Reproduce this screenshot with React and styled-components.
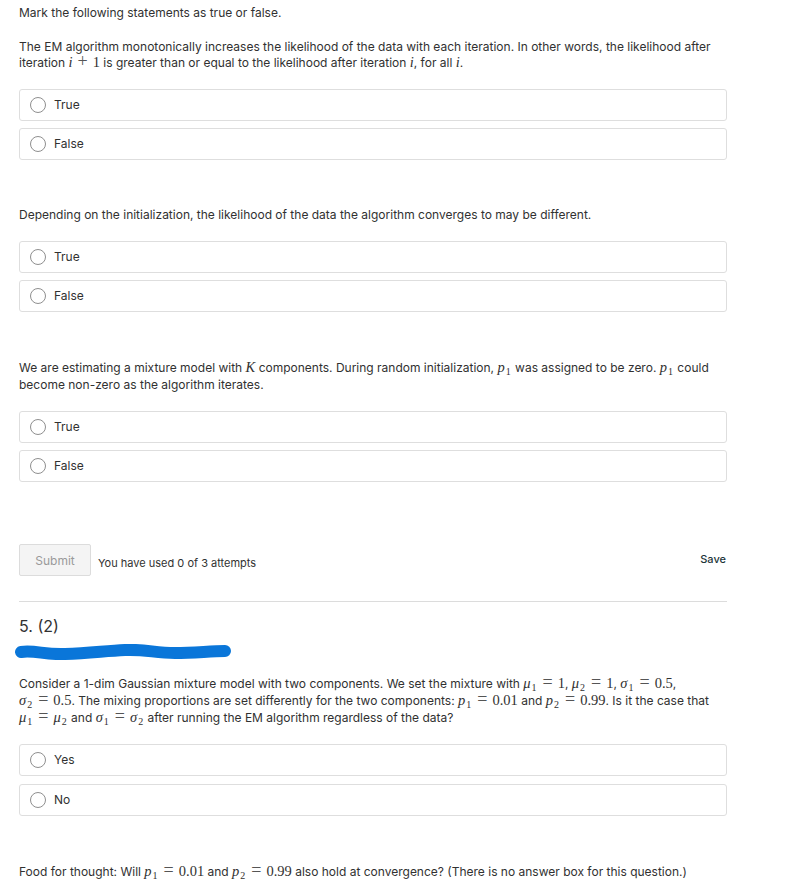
import React from 'react';
import styled, { createGlobalStyle } from 'styled-components';

const GlobalStyle = createGlobalStyle`
  body {
    margin: 0;
    background: #fff;
    font-family: Inter, "Noto Sans", sans-serif;
    color: #313131;
  }
`;

const Page = styled.div`
  width: 708px;
  padding: 5px 0 20px 19px;
  font-size: 12px;
  line-height: 16px;
`;

const Para = styled.p`
  margin: ${props => props.top || 0}px 0 0;
  line-height: ${props => props.lh || 16}px;
`;

const Options = styled.div`
  display: flex;
  flex-direction: column;
  gap: ${props => props.gap || 7}px;
  margin-top: ${props => props.top || 18}px;
`;

const Option = styled.label`
  display: flex;
  align-items: center;
  height: 30px;
  border: 1px solid #dedede;
  border-radius: 3px;
  padding-left: 10px;
  gap: 8px;
  cursor: pointer;
`;

const Radio = styled.span`
  width: 16px;
  height: 16px;
  border: 1px solid #8f8f8f;
  border-radius: 50%;
  box-sizing: border-box;
  flex: none;
`;

const M = styled.span`
  font-family: "Liberation Serif", "DejaVu Serif", serif;
  font-size: 14.5px;
  font-style: ${props => (props.up ? 'normal' : 'italic')};
  white-space: nowrap;
  line-height: 1;
`;

const Num = styled.span`
  font-style: normal;
`;

const Sub = styled.sub`
  font-style: normal;
  font-size: 10px;
  vertical-align: -3px;
  line-height: 0;
  margin-left: 1px;
  margin-right: 1px;
`;

const Op = styled.span`
  font-style: normal;
  font-size: 18px;
  line-height: 0;
  margin: 0 5px;
  color: #555;
`;

const ActionRow = styled.div`
  display: flex;
  align-items: center;
  margin-top: 62px;
`;

const SubmitButton = styled.button`
  width: 72px;
  height: 32px;
  background: #f4f4f4;
  border: 1px solid #dcdcdc;
  border-radius: 2px;
  color: #9a9a9a;
  font-family: Inter, sans-serif;
  font-size: 12px;
  padding: 0;
`;

const Attempts = styled.span`
  margin-left: 7px;
  margin-top: 6px;
  font-size: 11px;
`;

const SaveLink = styled.span`
  margin-left: auto;
  margin-top: -2px;
  margin-right: 1px;
  font-size: 11px;
  color: #1d3539;
  font-weight: 500;
`;

const Rule = styled.hr`
  border: none;
  border-top: 1px solid #dcdcdc;
  margin: 25px 0 0;
`;

const QTitle = styled.h3`
  margin: 14px 0 0;
  font-size: 16px;
  font-weight: 400;
  line-height: 20px;
`;

const Scribble = styled.svg`
  display: block;
  margin: 8px 0 0 -4px;
`;

const v = (name, sub) => (
  <>
    {name}
    {sub && <Sub>{sub}</Sub>}
  </>
);

function Choice({ label }) {
  return (
    <Option>
      <Radio />
      <span>{label}</span>
    </Option>
  );
}

export default function App() {
  return (
    <Page>
      <GlobalStyle />
      <Para>Mark the following statements as true or false.</Para>

      <Para top={18}>
        The EM algorithm monotonically increases the likelihood of the data with each
        iteration. In other words, the likelihood after iteration{' '}
        <M>i<Op>+</Op><Num>1</Num></M> is greater than or equal to the likelihood after
        iteration <M>i</M>, for all <M>i</M>.
      </Para>
      <Options>
        <Choice label="True" />
        <Choice label="False" />
      </Options>

      <Para top={47}>
        Depending on the initialization, the likelihood of the data the algorithm
        converges to may be different.
      </Para>
      <Options>
        <Choice label="True" />
        <Choice label="False" />
      </Options>

      <Para top={47} lh={17}>
        We are estimating a mixture model with <M>K</M> components. During random
        initialization, <M>{v('p', '1')}</M> was assigned to be zero. <M>{v('p', '1')}</M> could
        become non-zero as the algorithm iterates.
      </Para>
      <Options>
        <Choice label="True" />
        <Choice label="False" />
      </Options>

      <ActionRow>
        <SubmitButton>Submit</SubmitButton>
        <Attempts>You have used 0 of 3 attempts</Attempts>
        <SaveLink>Save</SaveLink>
      </ActionRow>

      <Rule />
      <QTitle>5. (2)</QTitle>
      <Scribble width="216" height="16" viewBox="0 0 216 16">
        <path
          d="M6 8 C20 6 30 11 50 10 C75 9 90 7 110 6 C130 5 140 9 160 9 C180 9 195 7 210 7"
          stroke="#0a76d9"
          strokeWidth="12"
          strokeLinecap="round"
          fill="none"
        />
      </Scribble>

      <Para top={15} lh={17}>
        Consider a 1-dim Gaussian mixture model with two components. We set the mixture
        with <M>{v('μ', '1')}<Op>=</Op><Num>1</Num></M>,{' '}
        <M>{v('μ', '2')}<Op>=</Op><Num>1</Num></M>,{' '}
        <M>{v('σ', '1')}<Op>=</Op><Num>0.5</Num></M>,{' '}
        <M>{v('σ', '2')}<Op>=</Op><Num>0.5</Num></M>. The
        mixing proportions are set differently for the two components:{' '}
        <M>{v('p', '1')}<Op>=</Op><Num>0.01</Num></M> and{' '}
        <M>{v('p', '2')}<Op>=</Op><Num>0.99</Num></M>. Is it
        the case that <M>{v('μ', '1')}<Op>=</Op>{v('μ', '2')}</M> and{' '}
        <M>{v('σ', '1')}<Op>=</Op>{v('σ', '2')}</M> after running the EM algorithm
        regardless of the data?
      </Para>
      <Options top={18} gap={8}>
        <Choice label="Yes" />
        <Choice label="No" />
      </Options>

      <Para top={48}>
        Food for thought: Will{' '}
        <M>{v('p', '1')}<Op>=</Op><Num>0.01</Num></M> and{' '}
        <M>{v('p', '2')}<Op>=</Op><Num>0.99</Num></M> also
        hold at convergence? (There is no answer box for this question.)
      </Para>
    </Page>
  );
}
